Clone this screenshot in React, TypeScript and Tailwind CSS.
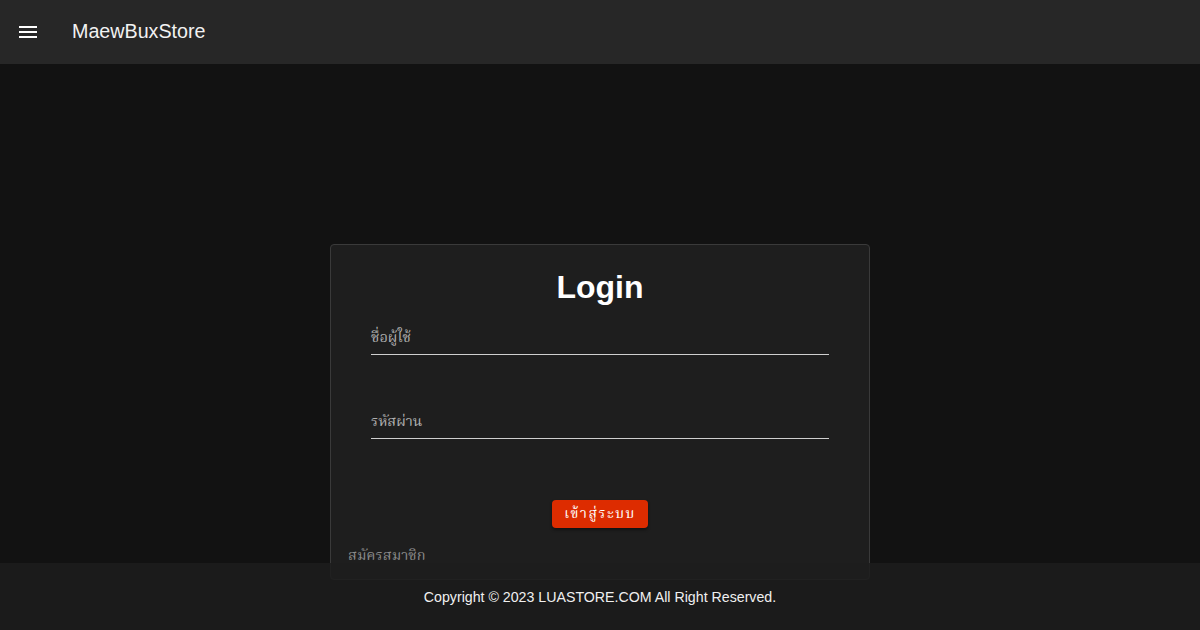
import React from "react";

export default function App() {
  return (
    <div className="relative min-h-screen bg-[#121212] font-['Liberation_Sans',Arial,sans-serif]">
      <header className="flex h-16 items-center bg-[#272727] px-4">
        <svg width="24" height="24" viewBox="0 0 24 24" fill="#ffffff">
          <path d="M3 18h18v-2H3zm0-5h18v-2H3zm0-7v2h18V6z" />
        </svg>
        <span className="ml-8 text-[19.7px] text-[#f2f2f2]">MaewBuxStore</span>
      </header>
      <main className="pt-[180px]">
        <div className="mx-auto flex h-[336px] w-[540px] flex-col rounded border border-[#3a3a3a] bg-[#1e1e1e]">
          <h1 className="mt-[24px] text-center text-[32px] font-bold leading-[37px] text-white">Login</h1>
          <div className="mx-10 mt-[13px] flex flex-col font-['Noto_Serif_Thai',serif]">
            <div className="flex h-[36px] flex-col justify-end border-b border-[#cfcfcf]">
              <span className="pb-[5px] text-[14.5px] leading-[20px] text-[#b0b0b0]">ชื่อผู้ใช้</span>
            </div>
            <div className="mt-[48px] flex h-[36px] flex-col justify-end border-b border-[#cfcfcf]">
              <span className="pb-[5px] text-[14.5px] leading-[20px] text-[#b0b0b0]">รหัสผ่าน</span>
            </div>
          </div>
          <div className="mt-[61px] flex justify-center">
            <button className="h-[28px] w-[96px] rounded bg-[#dd2c00] font-['Noto_Serif_Thai',serif] text-[14px] tracking-[1.5px] text-white shadow-[0_2px_3px_rgba(0,0,0,0.4)]">
              เข้าสู่ระบบ
            </button>
          </div>
          <div className="ml-[17px] mt-[19px] font-['Noto_Serif_Thai',serif] text-[14.5px] leading-[20px] text-[#8a8a8a]">สมัครสมาชิก</div>
        </div>
      </main>
      <footer className="absolute bottom-0 left-0 right-0 flex h-[67px] items-center justify-center bg-[#1d1d1d]/85 pt-[2px] text-[14.2px] text-[#f0f0f0]">
        Copyright © 2023 LUASTORE.COM All Right Reserved.
      </footer>
    </div>
  );
}
